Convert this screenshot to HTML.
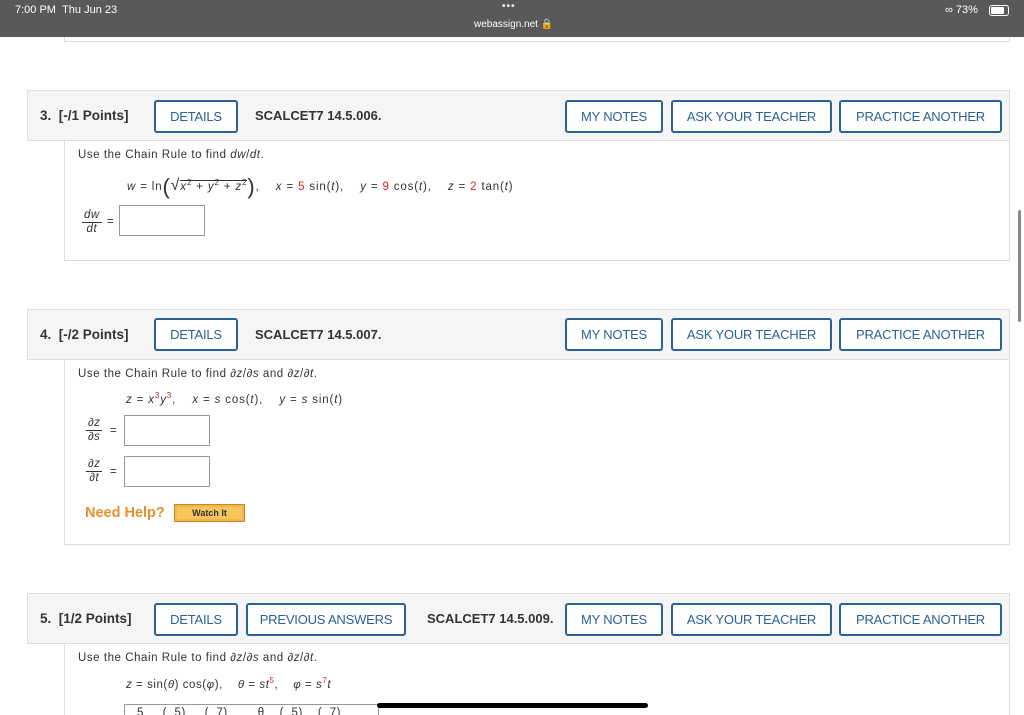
<!DOCTYPE html>
<html><head><meta charset="utf-8"><style>
*{margin:0;padding:0;box-sizing:border-box}
html,body{width:1024px;height:715px;overflow:hidden}
body{background:#fff;font-family:"Liberation Sans",sans-serif;position:relative;color:#333}
.abs{position:absolute}
.bar{left:0;top:0;width:1024px;height:37px;background:#595959;color:#fff}
.hdr{left:27px;width:983px;height:51px;background:#f5f5f5;border:1px solid #ddd}
.cnt{left:64px;width:946px;border:1px solid #ddd;border-top:none;background:#fff}
.btn{position:absolute;height:33px;border:2px solid #2b6195;border-radius:3px;background:#fff;color:#2b6195;font-size:13px;line-height:29px;text-align:center;letter-spacing:-0.2px}
.pts{position:absolute;font-size:13.5px;font-weight:bold;color:#333}
.code{position:absolute;font-size:13px;font-weight:bold;color:#333}
.t{position:absolute;font-size:11.5px;letter-spacing:0.55px;color:#333;white-space:nowrap}
.eq{letter-spacing:0.85px}
.i{font-style:italic}
.r{color:#e02020}
.box{position:absolute;border:1px solid #999;background:#fff}
.frac{position:absolute;font-size:11.5px;letter-spacing:0.5px;font-style:italic;text-align:center;color:#333}
.frac .n{border-bottom:1px solid #333;padding:0 2px 1px}
sup{font-size:8px}
</style></head><body>
<div class="abs bar">
<div class="abs" style="left:15px;top:4px;font-size:11px">7:00 PM&nbsp;&nbsp;Thu Jun 23</div>
<div class="abs" style="left:502px;top:1px;font-size:10px;letter-spacing:1px">•••</div>
<div class="abs" style="left:474px;top:19px;font-size:10px">webassign.net &#128274;</div>
<div class="abs" style="left:945px;top:4px;font-size:11px">&#8734; 73%</div>
<div class="abs" style="left:989px;top:5px;width:20px;height:11px;border:1px solid #fff;border-radius:3px;padding:1px"><div style="width:13px;height:7px;background:#fff;border-radius:1px"></div></div>
</div>
<div class="abs" style="left:64px;top:37px;width:946px;height:5px;border:1px solid #ddd;border-top:none"></div>
<div class="abs" style="left:1018px;top:210px;width:3px;height:112px;background:#888;border-radius:2px"></div>

<!-- Q3 -->
<div class="abs hdr" style="top:90px">
<div class="pts" style="left:12px;top:17px">3.&nbsp; [-/1 Points]</div>
<div class="btn" style="left:126px;top:9px;width:84px">DETAILS</div>
<div class="code" style="left:227px;top:17px">SCALCET7 14.5.006.</div>
<div class="btn" style="left:537px;top:9px;width:98px">MY NOTES</div>
<div class="btn" style="left:643px;top:9px;width:161px">ASK YOUR TEACHER</div>
<div class="btn" style="left:811px;top:9px;width:163px">PRACTICE ANOTHER</div>
</div>
<div class="abs cnt" style="top:141px;height:120px">
<div class="t" style="left:13px;top:8px">Use the Chain Rule to find <span class="i">dw</span>/<span class="i">dt</span>.</div>
<div class="t eq" style="left:62px;top:33px"><span class="i">w</span> = ln<span style="font-size:22px;vertical-align:-4px">(</span><span style="font-size:16px">√</span><span style="border-top:1px solid #333"><span class="i">x</span><sup>2</sup> + <span class="i">y</span><sup>2</sup> + <span class="i">z</span><sup>2</sup></span><span style="font-size:22px;vertical-align:-4px">)</span>,&nbsp;&nbsp;&nbsp; <span class="i">x</span> = <span class="r">5</span> sin(<span class="i">t</span>),&nbsp;&nbsp;&nbsp; <span class="i">y</span> = <span class="r">9</span> cos(<span class="i">t</span>),&nbsp;&nbsp;&nbsp; <span class="i">z</span> = <span class="r">2</span> tan(<span class="i">t</span>)</div>
<div class="frac" style="left:17px;top:68px"><div class="n">dw</div><div>dt</div></div>
<div class="t" style="left:42px;top:75px">=</div>
<div class="box" style="left:54px;top:64px;width:86px;height:31px"></div>
</div>

<!-- Q4 -->
<div class="abs hdr" style="top:309px">
<div class="pts" style="left:12px;top:17px">4.&nbsp; [-/2 Points]</div>
<div class="btn" style="left:126px;top:8px;width:84px">DETAILS</div>
<div class="code" style="left:227px;top:17px">SCALCET7 14.5.007.</div>
<div class="btn" style="left:537px;top:8px;width:98px">MY NOTES</div>
<div class="btn" style="left:643px;top:8px;width:161px">ASK YOUR TEACHER</div>
<div class="btn" style="left:811px;top:8px;width:163px">PRACTICE ANOTHER</div>
</div>
<div class="abs cnt" style="top:360px;height:185px">
<div class="t" style="left:13px;top:8px">Use the Chain Rule to find ∂<span class="i">z</span>/∂<span class="i">s</span> and ∂<span class="i">z</span>/∂<span class="i">t</span>.</div>
<div class="t eq" style="left:61px;top:31px"><span class="i">z</span> = <span class="i">x</span><sup class="r">3</sup><span class="i">y</span><sup class="r">3</sup>,&nbsp;&nbsp;&nbsp; <span class="i">x</span> = <span class="i">s</span> cos(<span class="i">t</span>),&nbsp;&nbsp;&nbsp; <span class="i">y</span> = <span class="i">s</span> sin(<span class="i">t</span>)</div>
<div class="frac" style="left:21px;top:57px"><div class="n">∂z</div><div>∂s</div></div>
<div class="t" style="left:45px;top:65px">=</div>
<div class="box" style="left:59px;top:55px;width:86px;height:31px"></div>
<div class="frac" style="left:21px;top:98px"><div class="n">∂z</div><div>∂t</div></div>
<div class="t" style="left:45px;top:106px">=</div>
<div class="box" style="left:59px;top:96px;width:86px;height:31px"></div>
<div class="abs" style="left:20px;top:145px;font-size:14.5px;font-weight:bold;color:#e8902c">Need Help?</div>
<div class="abs" style="left:109px;top:144px;width:71px;height:18px;border:1px solid #c8862a;background:#f6c55c;box-shadow:inset 0 0 0 2px #f0b84a;font-size:9px;font-weight:bold;color:#333;text-align:center;line-height:16px">Watch It</div>
</div>

<!-- Q5 -->
<div class="abs hdr" style="top:593px">
<div class="pts" style="left:12px;top:17px">5.&nbsp; [1/2 Points]</div>
<div class="btn" style="left:126px;top:9px;width:84px">DETAILS</div>
<div class="btn" style="left:218px;top:9px;width:160px">PREVIOUS ANSWERS</div>
<div class="code" style="left:399px;top:17px">SCALCET7 14.5.009.</div>
<div class="btn" style="left:537px;top:9px;width:98px">MY NOTES</div>
<div class="btn" style="left:643px;top:9px;width:161px">ASK YOUR TEACHER</div>
<div class="btn" style="left:811px;top:9px;width:163px">PRACTICE ANOTHER</div>
</div>
<div class="abs cnt" style="top:644px;height:80px">
<div class="t" style="left:13px;top:8px">Use the Chain Rule to find ∂<span class="i">z</span>/∂<span class="i">s</span> and ∂<span class="i">z</span>/∂<span class="i">t</span>.</div>
<div class="t" style="left:61px;top:32px"><span class="i">z</span> = sin(<span class="i">θ</span>) cos(<span class="i">φ</span>),&nbsp;&nbsp;&nbsp; <span class="i">θ</span> = <span class="i">st</span><sup class="r">5</sup>,&nbsp;&nbsp;&nbsp; <span class="i">φ</span> = <span class="i">s</span><sup class="r">7</sup><span class="i">t</span></div>
<div class="box" style="left:59px;top:60px;width:255px;height:30px;overflow:hidden"><div class="t" style="left:12px;top:2px">5&nbsp;&nbsp;&nbsp;&nbsp;&nbsp;(&nbsp;&nbsp;5)&nbsp;&nbsp;&nbsp;&nbsp;&nbsp;(&nbsp;&nbsp;7)&nbsp;&nbsp;&nbsp;&nbsp;&nbsp;&nbsp;&nbsp;&nbsp;θ&nbsp;&nbsp;&nbsp;&nbsp;(&nbsp;&nbsp;5)&nbsp;&nbsp;&nbsp;&nbsp;(&nbsp;&nbsp;7)</div></div>
</div>
<div class="abs" style="left:377px;top:703px;width:271px;height:5px;background:#000;border-radius:3px"></div>
</body></html>
